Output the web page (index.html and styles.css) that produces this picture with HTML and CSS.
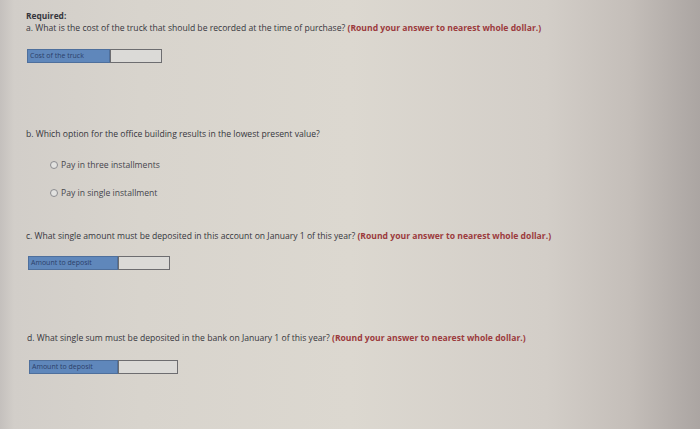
FILE: index.html
```html
<!DOCTYPE html>
<html>
<head>
<meta charset="utf-8">
<link rel="stylesheet" href="styles.css">
</head>
<body>
<div class="page">
  <p class="line required">Required:</p>
  <p class="line">a. What is the cost of the truck that should be recorded at the time of purchase? <span class="note">(Round your answer to nearest whole dollar.)</span></p>
  <div class="field field-a">
    <span class="label">Cost of the truck</span>
    <span class="input"></span>
  </div>

  <p class="line q-b">b. Which option for the office building results in the lowest present value?</p>
  <div class="options">
    <label class="option"><span class="radio"></span>Pay in three installments</label>
    <label class="option"><span class="radio"></span>Pay in single installment</label>
  </div>

  <p class="line q-c">c. What single amount must be deposited in this account on January 1 of this year? <span class="note">(Round your answer to nearest whole dollar.)</span></p>
  <div class="field field-c">
    <span class="label">Amount to deposit</span>
    <span class="input"></span>
  </div>

  <p class="line q-d">d. What single sum must be deposited in the bank on January 1 of this year? <span class="note">(Round your answer to nearest whole dollar.)</span></p>
  <div class="field field-d">
    <span class="label">Amount to deposit</span>
    <span class="input"></span>
  </div>
</div>
</body>
</html>
```

FILE: styles.css
```css
html, body {
  margin: 0;
  padding: 0;
  width: 700px;
  height: 429px;
  overflow: hidden;
}
body {
  background: linear-gradient(90deg, #c4c0bd 0%, #d2cec9 2%, #d8d4cd 20%, #dcd8d0 50%, #d3cec8 78%, #c4beb9 90%, #aba5a2 100%);
  font-family: "Open Sans", "Liberation Sans", sans-serif;
  color: #36363d;
}
.page {
  padding: 10px 0 0 26px;
  display: flex;
  flex-direction: column;
  align-items: flex-start;
}
.line {
  margin: 0;
  font-size: 8.6px;
  line-height: 12px;
  white-space: nowrap;
}
.required {
  font-weight: 700;
  font-size: 8.4px;
}
.note {
  color: #9c3b3d;
  font-weight: 700;
}
.field {
  display: flex;
  height: 14px;
  margin-top: 15px;
  margin-left: 1px;
}
.label {
  background: #5f87bb;
  color: #2c3f6a;
  font-size: 7px;
  line-height: 12px;
  padding-left: 2px;
  box-sizing: border-box;
  width: 83px;
  border: 1px solid #4e6f9c;
  white-space: nowrap;
  overflow: hidden;
}
.input {
  width: 52px;
  box-sizing: border-box;
  background: #dbdad7;
  border: 1px solid #6d6d70;
}
.q-b { margin-top: 65px; }
.options {
  display: flex;
  flex-direction: column;
  gap: 16px;
  margin-top: 19px;
  margin-left: 24px;
}
.option {
  display: flex;
  align-items: center;
  height: 12px;
  font-size: 8.6px;
  color: #45454c;
}
.radio {
  width: 8px;
  height: 8px;
  box-sizing: border-box;
  border-radius: 50%;
  border: 1px solid #8c8c90;
  background: #e2e2e0;
  margin-right: 3px;
}
.q-c { margin-top: 31px; }
.field-c { margin-top: 14px; margin-left: 2px; }
.field-c .label { width: 90px; }
.q-d { margin-top: 62px; margin-left: 1px; }
.field-d { margin-top: 16px; margin-left: 3px; }
.field-d .label { width: 89px; }
.field-d .input { width: 60px; }
```
